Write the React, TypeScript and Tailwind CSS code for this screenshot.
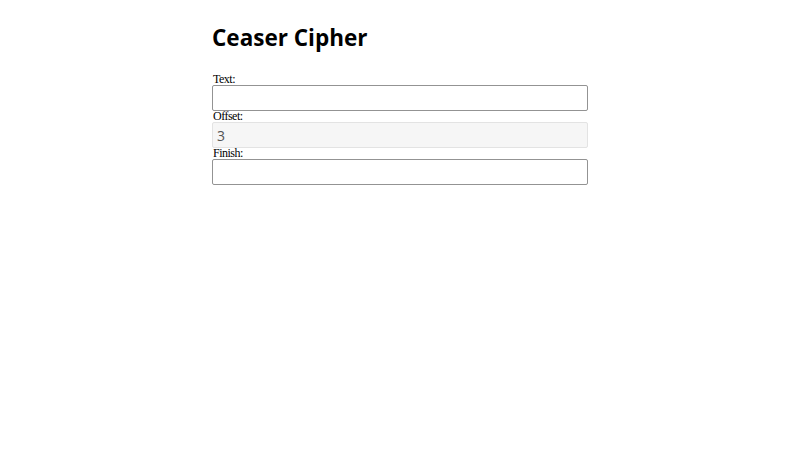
import React, { useState } from "react";

export default function App() {
  const [text, setText] = useState("");
  const offset = 3;

  // shift each letter by the offset, keep everything else as is
  const finish = text.replace(/[a-z]/gi, (ch) => {
    const base = ch <= "Z" ? 65 : 97;
    return String.fromCharCode(((ch.charCodeAt(0) - base + offset) % 26) + base);
  });

  return (
    <div className="w-full min-h-[450px] bg-white">
      <div className="w-[376px] mx-auto pt-[21px]">
        <h1 className="text-[22.5px] leading-[34px] font-bold text-black font-['Open_Sans',sans-serif] mb-[19px]">
          Ceaser Cipher
        </h1>
        <div className="flex flex-col font-['Liberation_Serif',serif] text-[12px] leading-[11px] tracking-[-0.5px] text-black">
          <label className="pl-px">Text:</label>
          <input
            value={text}
            onChange={(e) => setText(e.target.value)}
            className="h-[26px] w-full border border-[#939393] rounded-[2px] px-1 text-[14px] tracking-normal font-['Open_Sans',sans-serif] bg-white"
          />
          <label className="pl-px">Offset:</label>
          <input
            value={offset}
            disabled
            className="h-[26px] w-full border border-[#e3e3e3] rounded-[2px] px-1 text-[14px] tracking-normal text-[#545454] font-['Open_Sans',sans-serif] bg-[#f6f6f6]"
          />
          <label className="pl-px">Finish:</label>
          <input
            value={finish}
            readOnly
            className="h-[26px] w-full border border-[#939393] rounded-[2px] px-1 text-[14px] tracking-normal font-['Open_Sans',sans-serif] bg-white"
          />
        </div>
      </div>
    </div>
  );
}
